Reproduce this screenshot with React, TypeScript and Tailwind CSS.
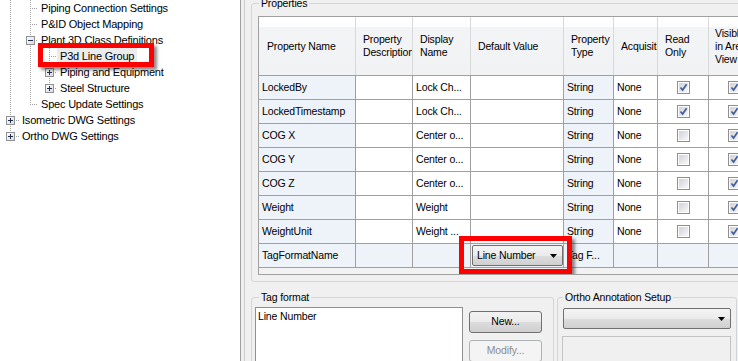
import React from "react";

type Row = {
  name: string;
  display: string;
  type: string;
  acq: string;
  readOnly?: boolean;
  visible?: boolean;
  combo?: string;
};

const rows: Row[] = [
  { name: "LockedBy", display: "Lock Ch...", type: "String", acq: "None", readOnly: true, visible: true },
  { name: "LockedTimestamp", display: "Lock Ch...", type: "String", acq: "None", readOnly: true, visible: true },
  { name: "COG X", display: "Center o...", type: "String", acq: "None", readOnly: false, visible: true },
  { name: "COG Y", display: "Center o...", type: "String", acq: "None", readOnly: false, visible: true },
  { name: "COG Z", display: "Center o...", type: "String", acq: "None", readOnly: false, visible: true },
  { name: "Weight", display: "Weight", type: "String", acq: "None", readOnly: false, visible: true },
  { name: "WeightUnit", display: "Weight ...", type: "String", acq: "None", readOnly: false, visible: true },
  { name: "TagFormatName", display: "", type: "Tag F...", acq: "", combo: "Line Number" },
];

// column widths include the right grid line
const W = ["w-[97px]", "w-[57px]", "w-[58px]", "w-[93px]", "w-[50px]", "w-[44px]", "w-[51px]", "w-[51px]"];

const headers = [
  "Property Name",
  "Property Description",
  "Display Name",
  "Default Value",
  "Property Type",
  "Acquisition",
  "Read Only",
  "Visible in Area View",
];

const tree = [
  { level: 1, text: "Piping Connection Settings" },
  { level: 1, text: "P&ID Object Mapping" },
  { level: 1, text: "Plant 3D Class Definitions" },
  { level: 2, text: "P3d Line Group", selected: true },
  { level: 2, text: "Piping and Equipment" },
  { level: 2, text: "Steel Structure" },
  { level: 1, text: "Spec Update Settings" },
  { level: 0, text: "Isometric DWG Settings" },
  { level: 0, text: "Ortho DWG Settings" },
];

const PAD = ["pl-[19px]", "pl-[38px]", "pl-[57px]"];

function ExpandBox({ cx, cy, open }: { cx: number; cy: number; open?: boolean }) {
  return (
    <g shapeRendering="crispEdges">
      <rect x={cx - 3.5} y={cy - 3.5} width={8} height={8} fill="url(#boxfill)" stroke="#919191" />
      <line x1={cx - 2} x2={cx + 3} y1={cy + 0.5} y2={cy + 0.5} stroke="#1e2f4d" />
      {!open && <line x1={cx + 0.5} x2={cx + 0.5} y1={cy - 2} y2={cy + 3} stroke="#1e2f4d" />}
    </g>
  );
}

function TreeLines() {
  const dot = { stroke: "#a0a0a0", strokeDasharray: "1 1", shapeRendering: "crispEdges" as const };
  const c = (r: number) => r * 16 + 8.5;
  return (
    <svg className="absolute left-0 top-0" width="240" height="150">
      <defs>
        <linearGradient id="boxfill" x1="0" y1="0" x2="1" y2="1">
          <stop offset="0" stopColor="#ffffff" />
          <stop offset="1" stopColor="#d9d9d9" />
        </linearGradient>
      </defs>
      {/* level 0 */}
      <line x1={10.5} x2={10.5} y1={0} y2={c(8)} {...dot} />
      <line x1={10} x2={19} y1={c(7)} y2={c(7)} {...dot} />
      <line x1={10} x2={19} y1={c(8)} y2={c(8)} {...dot} />
      {/* level 1 */}
      <line x1={30.5} x2={30.5} y1={0} y2={c(6)} {...dot} />
      {[0, 1, 2, 6].map((r) => (
        <line key={r} x1={30} x2={38} y1={c(r)} y2={c(r)} {...dot} />
      ))}
      {/* level 2 */}
      <line x1={49.5} x2={49.5} y1={44} y2={c(5)} {...dot} />
      {[3, 4, 5].map((r) => (
        <line key={r} x1={49} x2={57} y1={c(r)} y2={c(r)} {...dot} />
      ))}
      <ExpandBox cx={30} cy={40} open />
      <ExpandBox cx={49} cy={72} />
      <ExpandBox cx={49} cy={88} />
      <ExpandBox cx={10} cy={120} />
      <ExpandBox cx={10} cy={136} />
    </svg>
  );
}

function Tree() {
  return (
    <div className="relative w-[241px] shrink-0 border-r border-[#a0a0a0] bg-white text-[11px] tracking-[-0.2px]">
      <TreeLines />
      <div className="relative">
        {tree.map((t) => (
          <div key={t.text} className={`relative h-[16px] leading-[16px] whitespace-nowrap ${PAD[t.level]}`}>
            <span className={`inline-block h-[16px] px-[3px] ${t.selected ? "bg-[#ececec]" : ""}`}>{t.text}</span>
            {t.selected && (
              <div className="absolute left-[38px] top-[-5px] h-[24px] w-[116px] border-[5px] border-[#ff0000] shadow-[3px_3px_3px_rgba(0,0,0,0.45)]" />
            )}
          </div>
        ))}
      </div>
    </div>
  );
}

function Check({ checked }: { checked?: boolean }) {
  return (
    <span className="flex h-[13px] w-[13px] items-center justify-center border border-[#8f8f8f] bg-white">
      <span className="flex h-[9px] w-[9px] items-center justify-center bg-[linear-gradient(135deg,#cfd2d8,#f8f8f8)]">
        {checked && (
          <svg width="9" height="9" viewBox="0 0 9 9">
            <path d="M1.5 4.5 L3.6 7 L7.6 1.2" stroke="#3f5c9a" strokeWidth="1.7" fill="none" />
          </svg>
        )}
      </span>
    </span>
  );
}

function Combo({ text, className }: { text: string; className: string }) {
  return (
    <div
      className={`flex items-center rounded-[2px] border border-[#707070] bg-[linear-gradient(to_bottom,#f4f4f4_0%,#ebebeb_50%,#dddddd_51%,#d0d0d0_100%)] ${className}`}
    >
      <span className="pl-[3px] whitespace-nowrap">{text}</span>
      <svg className="ml-auto mr-[5px]" width="7" height="4" viewBox="0 0 7 4">
        <path d="M0 0H7L3.5 4Z" fill="#000" />
      </svg>
    </div>
  );
}

function Grid() {
  return (
    <div className="h-[259px] overflow-hidden border border-[#a0a0a0] bg-[#f2f2f2]">
      <div className="flex h-[59px] border-b border-[#a0a0a0] bg-[linear-gradient(to_bottom,#ffffff_0%,#fdfdfd_17%,#f3f4f6_18%,#f1f2f4_100%)]">
        {headers.map((h, i) => (
          <div
            key={h}
            className={`${W[i]} flex shrink-0 items-center overflow-hidden border-r border-[#d9d9d9] pr-[5px] leading-[13px] ${
              i === 0 ? "pl-[8px]" : i === 7 ? "pl-[6px]" : "pl-[7px]"
            }`}
          >
            <span>{h}</span>
          </div>
        ))}
      </div>
      {rows.map((r, ri) => {
        const last = ri === rows.length - 1;
        const cells: React.ReactNode[] = [
          r.name,
          "",
          r.display,
          r.combo ? (
            <div className="relative h-full pl-px pt-px">
              <Combo text={r.combo} className="h-[21px] w-[91px] pl-[1px]" />
              <div className="absolute left-[-12px] top-[-8px] z-10 h-[38px] w-[113px] border-[5px] border-[#ff0000] shadow-[3px_3px_3px_rgba(0,0,0,0.45)]" />
            </div>
          ) : (
            ""
          ),
          r.type,
          r.acq,
          r.readOnly === undefined ? "" : <Check checked={r.readOnly} />,
          r.visible === undefined ? "" : <Check checked={r.visible} />,
        ];
        return (
          <div key={r.name} className="flex h-[24px]">
            {cells.map((c, i) => {
              const shaded = last || i === 0 || i === 4;
              const isCheck = i >= 6;
              const isCombo = i === 3 && r.combo;
              return (
                <div
                  key={i}
                  className={`${W[i]} flex h-[24px] shrink-0 items-center whitespace-nowrap border-b border-r border-[#a0a0a0] ${
                    shaded ? "bg-[#eef3fa]" : "bg-white"
                  } ${isCheck ? "justify-center" : isCombo ? "items-stretch" : "pl-[3px]"} ${isCombo ? "overflow-visible" : "overflow-hidden"}`}
                >
                  {c}
                </div>
              );
            })}
          </div>
        );
      })}
    </div>
  );
}

function Button({ label, disabled }: { label: string; disabled?: boolean }) {
  return (
    <button
      type="button"
      className={`h-[22px] w-[73px] rounded-[3px] border ${
        disabled
          ? "border-[#adb2b5] bg-[#f4f4f4] text-[#8d8d8d]"
          : "border-[#707070] bg-[linear-gradient(to_bottom,#f2f2f2_0%,#ebebeb_50%,#dddddd_51%,#cfcfcf_100%)]"
      }`}
    >
      {label}
    </button>
  );
}

export default function App() {
  return (
    <div className="flex h-[361px] w-[738px] overflow-hidden bg-[#f0f0f0] font-['Liberation_Sans',Arial,sans-serif] text-black">
      <Tree />
      <div className="ml-[3px] flex min-w-0 flex-1 border-l border-[#cdcdcd] pl-[6px] text-[10.5px] tracking-[-0.15px]">
        <div className="flex min-w-0 flex-1 flex-col">
          <fieldset className="mt-[-3px] w-[520px] shrink-0 rounded-[3px] border border-[#d0d6da]">
            <legend className="ml-[7px] px-[2px] leading-[12px]">Properties</legend>
            <div className="pb-[6px] pl-[6px] pt-[7px]">
              <Grid />
            </div>
          </fieldset>
          <div className="mt-[9px] flex gap-[3px]">
            <fieldset className="h-[90px] w-[303px] shrink-0 rounded-[3px] border border-[#d0d6da]">
              <legend className="ml-[7px] px-[2px] leading-[12px]">Tag format</legend>
              <div className="flex gap-[6px] pl-[3px] pt-[4px]">
                <div className="h-[70px] w-[208px] border border-[#8e8f8f] bg-white pl-[2px] pt-[2px] leading-[13px]">
                  Line Number
                </div>
                <div className="mt-[4px] flex flex-col gap-[7px]">
                  <Button label="New..." />
                  <Button label="Modify..." disabled />
                </div>
              </div>
            </fieldset>
            <fieldset className="h-[90px] w-[180px] shrink-0 rounded-[3px] border border-[#d0d6da]">
              <legend className="ml-[5px] px-[2px] leading-[12px]">Ortho Annotation Setup</legend>
              <div className="pl-[5px] pt-[5px]">
                <Combo text="" className="h-[21px] w-[168px]" />
                <div className="ml-[-1px] mt-[7px] h-[40px] w-[169px] border border-[#c3c3c3] bg-[#f0f0f0]" />
              </div>
            </fieldset>
          </div>
        </div>
      </div>
    </div>
  );
}
